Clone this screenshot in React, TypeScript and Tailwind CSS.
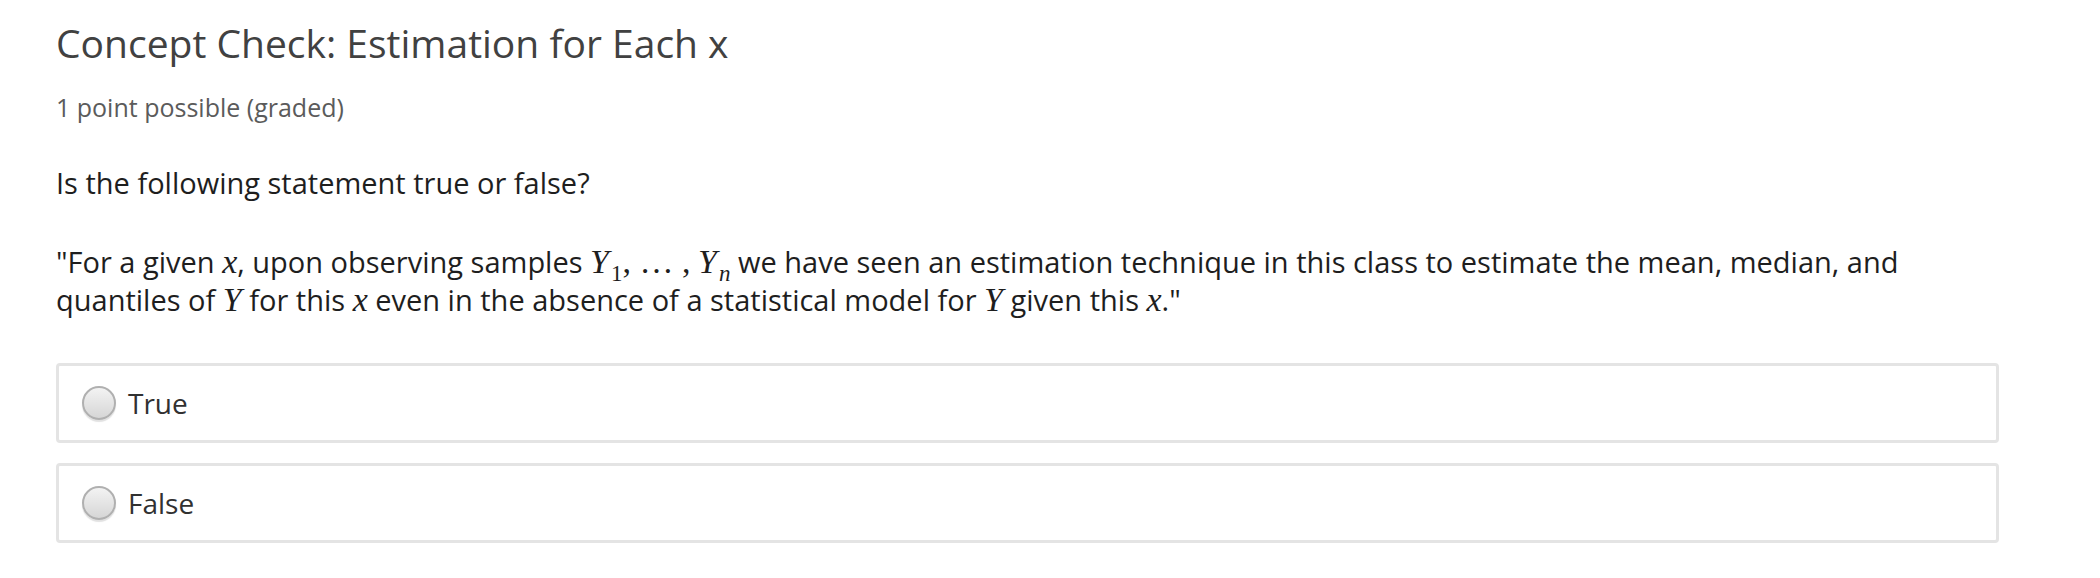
import React from "react";

const serif = '"Liberation Serif", "DejaVu Serif", serif';

const M = ({ children }: { children: React.ReactNode }) => (
  <span className="italic text-[34px] leading-none" style={{ fontFamily: serif }}>
    {children}
  </span>
);

const MR = ({ children }: { children: React.ReactNode }) => (
  <span className="text-[34px] leading-none" style={{ fontFamily: serif }}>
    {children}
  </span>
);

const Option = ({ label }: { label: string }) => (
  <div className="flex h-[80px] w-[1943px] items-center rounded-[4px] border-[3px] border-[#e4e4e4] bg-white pl-[23px]">
    <div className="h-[34px] w-[34px] rounded-full border-2 border-[#b0b0b0] bg-gradient-to-b from-[#f3f3f3] to-[#d6d6d6] shadow-[0_2px_1px_rgba(0,0,0,0.12)]" />
    <span className="ml-[12px] text-[28px] leading-none text-[#313131]">{label}</span>
  </div>
);

export default function App() {
  return (
    <div className="min-h-[578px] w-[2100px] bg-white pl-[56px]" style={{ fontFamily: '"Open Sans", "Noto Sans", sans-serif' }}>
      <h1 className="pt-[18px] text-[39px] leading-[50px] font-normal text-[#414141]">Concept Check: Estimation for Each x</h1>
      <p className="mt-[24px] text-[25px] leading-[30px] text-[#5b5b5b]">1 point possible (graded)</p>
      <p className="mt-[42px] text-[29px] leading-[38px] text-[#1e1e1e]">Is the following statement true or false?</p>
      <p className="mt-[41px] text-[29px] leading-[38px] text-[#1e1e1e]">
        "For a given <M>x</M>, upon observing samples <M>Y</M>
        <span className="relative top-[8px] ml-[2px] text-[23px] leading-none" style={{ fontFamily: serif }}>1</span>
        <MR>, … ,</MR> <M>Y</M>
        <span className="relative top-[8px] ml-[2px] italic text-[23px] leading-none" style={{ fontFamily: serif }}>n</span> we have seen an estimation technique in this class to estimate the mean, median, and
        <br />
        quantiles of <M>Y</M> for this <M>x</M> even in the absence of a statistical model for <M>Y</M> given this <M>x</M>."
      </p>
      <div className="mt-[44px] flex flex-col gap-[20px]">
        <Option label="True" />
        <Option label="False" />
      </div>
    </div>
  );
}
